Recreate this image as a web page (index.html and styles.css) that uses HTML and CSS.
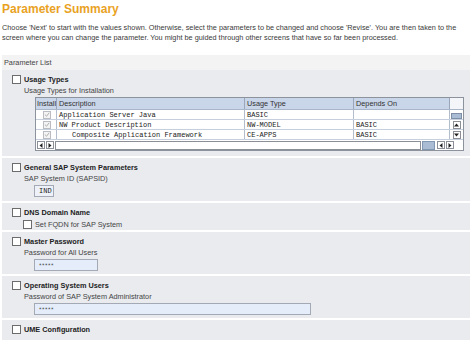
FILE: index.html
```html
<!DOCTYPE html>
<html lang="en">
<head>
    <meta charset="UTF-8">
    <title>Parameter Summary</title>
    <link rel="stylesheet" href="styles.css">
</head>
<body>
    <h1 class="title">Parameter Summary</h1>
    <p class="intro">Choose 'Next' to start with the values shown. Otherwise, select the parameters to be changed and choose 'Revise'. You are then taken to the screen where you can change the parameter. You might be guided through other screens that have so far been processed.</p>

    <div class="list-head">Parameter List</div>

    <div class="panel">
        <!-- Usage Types -->
        <div class="section usage">
            <div class="sec-head"><span class="box"></span>Usage Types</div>
            <div class="field-label">Usage Types for Installation</div>
            <div class="table">
                <div class="row head">
                    <div class="c c-inst">Install</div>
                    <div class="c c-desc">Description</div>
                    <div class="c c-type">Usage Type</div>
                    <div class="c c-dep">Depends On</div>
                    <div class="c c-scroll"></div>
                </div>
                <div class="row">
                    <div class="c c-inst"><span class="dis-box"><svg width="7" height="7" viewBox="0 0 7 7"><path d="M1 3.5 L3 5.5 L6 1.5" fill="none" stroke="#a4a4a4" stroke-width="1"/></svg></span></div>
                    <div class="c c-desc mono">Application Server Java</div>
                    <div class="c c-type mono">BASIC</div>
                    <div class="c c-dep mono"></div>
                    <div class="c c-scroll"><span class="thumb-v"></span></div>
                </div>
                <div class="row">
                    <div class="c c-inst"><span class="dis-box"><svg width="7" height="7" viewBox="0 0 7 7"><path d="M1 3.5 L3 5.5 L6 1.5" fill="none" stroke="#a4a4a4" stroke-width="1"/></svg></span></div>
                    <div class="c c-desc mono">NW Product Description</div>
                    <div class="c c-type mono">NW-MODEL</div>
                    <div class="c c-dep mono">BASIC</div>
                    <div class="c c-scroll"><span class="arrow-btn"><svg width="5" height="4" viewBox="0 0 5 4"><path d="M0 3.5 L2.5 0.5 L5 3.5 Z" fill="#222"/></svg></span></div>
                </div>
                <div class="row">
                    <div class="c c-inst"><span class="dis-box"><svg width="7" height="7" viewBox="0 0 7 7"><path d="M1 3.5 L3 5.5 L6 1.5" fill="none" stroke="#a4a4a4" stroke-width="1"/></svg></span></div>
                    <div class="c c-desc mono indent">Composite Application Framework</div>
                    <div class="c c-type mono">CE-APPS</div>
                    <div class="c c-dep mono">BASIC</div>
                    <div class="c c-scroll"><span class="arrow-btn"><svg width="5" height="4" viewBox="0 0 5 4"><path d="M0 0.5 L2.5 3.5 L5 0.5 Z" fill="#222"/></svg></span></div>
                </div>
                <div class="hscroll">
                    <span class="arrow-btn"><svg width="4" height="5" viewBox="0 0 4 5"><path d="M3.5 0 L0.5 2.5 L3.5 5 Z" fill="#222"/></svg></span>
                    <span class="arrow-btn"><svg width="4" height="5" viewBox="0 0 4 5"><path d="M0.5 0 L3.5 2.5 L0.5 5 Z" fill="#222"/></svg></span>
                    <span class="track"></span>
                    <span class="thumb-h"></span>
                    <span class="arrow-btn"><svg width="4" height="5" viewBox="0 0 4 5"><path d="M3.5 0 L0.5 2.5 L3.5 5 Z" fill="#222"/></svg></span>
                    <span class="arrow-btn"><svg width="4" height="5" viewBox="0 0 4 5"><path d="M0.5 0 L3.5 2.5 L0.5 5 Z" fill="#222"/></svg></span>
                </div>
            </div>
        </div>

        <!-- General SAP System Parameters -->
        <div class="section general">
            <div class="sec-head"><span class="box"></span>General SAP System Parameters</div>
            <div class="field-label">SAP System ID (SAPSID)</div>
            <div class="input short mono">IND</div>
        </div>

        <!-- DNS Domain Name -->
        <div class="section tight">
            <div class="sec-head"><span class="box"></span>DNS Domain Name</div>
            <div class="sub-check"><span class="box"></span>Set FQDN for SAP System</div>
        </div>

        <!-- Master Password -->
        <div class="section">
            <div class="sec-head"><span class="box"></span>Master Password</div>
            <div class="field-label">Password for All Users</div>
            <div class="input pw mid">*****</div>
        </div>

        <!-- Operating System Users -->
        <div class="section">
            <div class="sec-head"><span class="box"></span>Operating System Users</div>
            <div class="field-label">Password of SAP System Administrator</div>
            <div class="input pw long">*****</div>
        </div>

        <!-- UME Configuration -->
        <div class="section last">
            <div class="sec-head"><span class="box"></span>UME Configuration</div>
        </div>
    </div>
</body>
</html>
```

FILE: styles.css
```css
body {
    font-family: "Liberation Sans", Arial, sans-serif;
    font-size: 7.3px;
    color: #333;
    margin: 0;
    padding: 0 4px 0 2px;
    background: #fff;
}
.title {
    margin: 0;
    padding-top: 2px;
    height: 18px;
    line-height: 14px;
    font-size: 12px;
    font-weight: bold;
    color: #e9a21f;
}
.intro {
    margin: 3px 0 0 0;
    line-height: 10px;
    color: #3a3a3a;
}
.list-head {
    margin-top: 12px;
    height: 15px;
    line-height: 15px;
    padding-left: 2px;
    background: #f3f3f3;
    color: #444;
}
.panel {
    display: flex;
    flex-direction: column;
    gap: 2px;
    background: #fff;
}
.section {
    background: #e9ebef;
    padding: 3px 0 3px 10px;
}
.section.usage {
    padding-bottom: 5px;
}
.section.general {
    padding-bottom: 4px;
}
.section.tight {
    padding-bottom: 0;
}
.section.last {
    padding-bottom: 6px;
}
.sec-head {
    display: flex;
    align-items: center;
    height: 12px;
    font-weight: bold;
    color: #222;
}
.box {
    display: inline-block;
    width: 7px;
    height: 7px;
    border: 1px solid #6c6c6c;
    background: #fff;
    margin-right: 3px;
}
.field-label {
    padding-left: 12px;
    height: 12px;
    line-height: 12px;
    color: #444;
}
.sub-check {
    display: flex;
    align-items: center;
    height: 12px;
    padding-left: 11px;
    color: #444;
}
.mono {
    font-family: "Liberation Mono", "DejaVu Sans Mono", monospace;
    font-size: 7px;
    color: #222;
}
.input {
    margin-left: 22px;
    height: 10px;
    line-height: 10px;
    border: 1px solid #a3aab5;
    background: #e6edfa;
    padding-left: 4px;
    box-sizing: content-box;
}
.input.short {
    width: 14px;
    background: #eef1f7;
}
.input.mid {
    width: 58px;
}
.input.long {
    width: 271px;
}
.input.pw {
    font-family: "DejaVu Sans", sans-serif;
    font-size: 5px;
    letter-spacing: 0.5px;
    color: #333;
}

/* table */
.table {
    margin-left: 23px;
    width: 427px;
    border: 1px solid #8d939c;
    background: #fff;
}
.row {
    display: flex;
    height: 9px;
    border-bottom: 1px solid #c6cfdd;
}
.row.head {
    height: 11px;
    background: #c9d5e9;
    border-bottom: 1px solid #a9b6ca;
}
.c {
    display: flex;
    align-items: center;
    padding-left: 2px;
    border-right: 1px solid #b4bdcb;
    overflow: hidden;
    white-space: nowrap;
}
.head .c {
    color: #333;
    border-right-color: #9aa7ba;
}
.c-inst {
    width: 19px;
    justify-content: center;
    padding-left: 1px;
}
.c-desc {
    width: 185px;
}
.c-desc.indent {
    padding-left: 15px;
    width: 172px;
}
.c-type {
    width: 106px;
}
.c-dep {
    width: 93px;
}
.c-scroll {
    flex: 1;
    border-right: none;
    padding-left: 0;
    justify-content: center;
    background: #fff;
}
.head .c-scroll {
    background: #f3f5f8;
}
.dis-box {
    display: inline-flex;
    align-items: center;
    justify-content: center;
    width: 6px;
    height: 6px;
    border: 1px solid #b9bcc2;
    background: #f4f4f4;
}
.thumb-v {
    width: 9px;
    height: 4px;
    margin-top: 3px;
    border: 1px solid #7d8ea6;
    background: #a9bcd3;
}
.arrow-btn {
    display: inline-flex;
    align-items: center;
    justify-content: center;
    width: 6px;
    height: 6px;
    border: 1px solid #8c8f95;
    background: #fff;
}
.hscroll {
    display: flex;
    align-items: center;
    gap: 1px;
    height: 10px;
    padding-left: 1px;
}
.track {
    width: 364px;
    height: 7px;
    border: 1px solid #8c8f95;
    background: #fff;
}
.thumb-h {
    width: 11px;
    height: 7px;
    border: 1px solid #8196b0;
    background: #a9bcd3;
    margin-right: 1px;
}
```
